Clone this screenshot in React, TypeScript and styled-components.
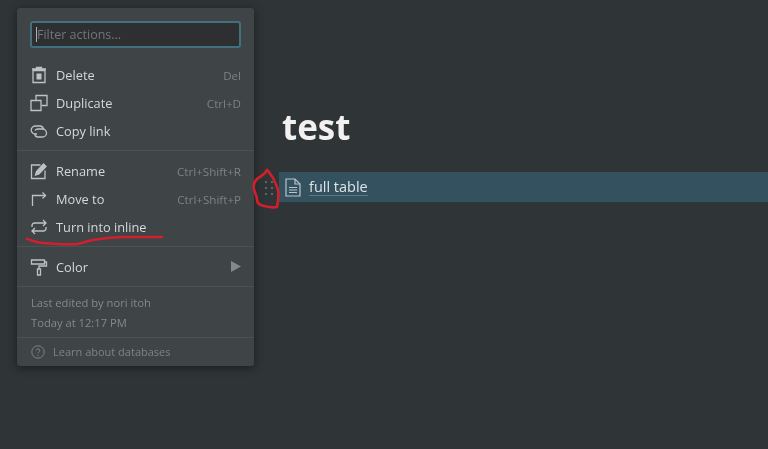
import styled, { createGlobalStyle } from 'styled-components';
import type { ReactNode } from 'react';

const GlobalStyle = createGlobalStyle`
	html, body {
		margin: 0;
		height: 100%;
		background: #2f3437;
		overflow: hidden;
	}
	#root {
		height: 100%;
	}
`;

const StyledPage = styled.div`
	position: relative;
	width: 768px;
	height: 449px;
	background: #2f3437;
	font-family: 'Open Sans', 'Noto Sans', sans-serif;
	filter: blur(0.4px);
`;

const StyledContent = styled.main`
	display: flex;
	flex-direction: column;
	padding: 104px 0 0 279px;
`;

const StyledTitle = styled.h1`
	margin: 0 0 22px 3px;
	font-family: 'Open Sans', sans-serif;
	font-size: 35px;
	line-height: 46px;
	font-weight: 700;
	color: #f2f1ef;
`;

const StyledDbRow = styled.div`
	display: flex;
	align-items: center;
	gap: 8px;
	height: 30px;
	padding-left: 6px;
	background: #33515f;
	color: #dfe5e7;
	font-size: 14.5px;
`;

const StyledDbName = styled.span`
	border-bottom: 1px solid #5d7783;
	line-height: 17px;
`;

const StyledMenu = styled.div`
	position: absolute;
	left: 17px;
	top: 8px;
	width: 237px;
	height: 358px;
	display: flex;
	flex-direction: column;
	background: #3f4447;
	border-radius: 3px;
	box-shadow: 0 2px 10px rgba(0, 0, 0, 0.45);
`;

const StyledFilter = styled.div`
	display: flex;
	align-items: center;
	flex-shrink: 0;
	box-sizing: border-box;
	height: 27px;
	margin: 13px;
	padding-left: 4px;
	background: #2d2f31;
	border: 2.5px solid #43707f;
	border-radius: 3px;
	color: #72767a;
	font-size: 12.5px;
`;

const StyledCaret = styled.span`
	width: 1px;
	height: 15px;
	background: #aab0b3;
`;

const StyledSection = styled.section`
	display: flex;
	flex-direction: column;
	flex-shrink: 0;
	padding: 0 0 5px;
	margin-bottom: 6px;
	border-bottom: 1px solid #4c5154;
`;

const StyledItem = styled.div`
	display: flex;
	align-items: center;
	gap: 8px;
	height: 28px;
	padding: 0 13px;
	color: #d5d7d8;
	font-size: 12.8px;
`;

const StyledItemIcon = styled.svg`
	width: 18px;
	height: 18px;
	flex-shrink: 0;
	fill: none;
	stroke: #bfc2c3;
	stroke-width: 1.3;
`;

const StyledItemLabel = styled.span`
	flex: 1;
`;

const StyledShortcut = styled.span`
	color: #7d8184;
	font-size: 11.6px;
`;

const StyledMeta = styled.div`
	display: flex;
	flex-direction: column;
	flex-shrink: 0;
	gap: 5px;
	padding: 2px 14px 7px;
	border-bottom: 1px solid #4c5154;
	color: #85898b;
	font-size: 11.2px;
	line-height: 15px;
`;

const StyledHelp = styled.div`
	display: flex;
	align-items: center;
	gap: 8px;
	padding: 6px 14px;
	color: #7f8386;
	font-size: 11px;
`;

const StyledInk = styled.svg`
	position: absolute;
	left: 0;
	top: 0;
	width: 768px;
	height: 449px;
	fill: none;
	stroke: #d11f2c;
	stroke-width: 2.6;
	stroke-linecap: round;
	stroke-linejoin: round;
	pointer-events: none;
`;

const StyledDots = styled.div`
	position: absolute;
	left: 265px;
	top: 181px;
	display: grid;
	grid-template-columns: repeat(2, 2px);
	gap: 4px;
`;

const StyledDot = styled.span`
	width: 2px;
	height: 2px;
	border-radius: 50%;
	background: #6f7478;
`;

function DragDots() {
	return (
		<StyledDots>
			{Array.from({ length: 6 }).map((_, i) => (
				<StyledDot key={i} />
			))}
		</StyledDots>
	);
}

function Item({ icon, label, shortcut }: { icon: ReactNode; label: string; shortcut?: ReactNode }) {
	return (
		<StyledItem>
			<StyledItemIcon viewBox="0 0 18 18">{icon}</StyledItemIcon>
			<StyledItemLabel>{label}</StyledItemLabel>
			{shortcut && <StyledShortcut>{shortcut}</StyledShortcut>}
		</StyledItem>
	);
}

function App() {
	return (
		<StyledPage>
			<GlobalStyle />
			<StyledContent>
				<StyledTitle>test</StyledTitle>
				<StyledDbRow>
					<svg width="16" height="19" viewBox="0 0 16 19" fill="none" stroke="#b9c5ca" strokeWidth="1.2">
						<path d="M1 1h9l5 5v12H1z" />
						<path d="M10 1v5h5" />
						<path d="M4 9.500h8M4 12h8M4 14.500h8" />
					</svg>
					<StyledDbName>full table</StyledDbName>
				</StyledDbRow>
			</StyledContent>

			<StyledMenu>
				<StyledFilter>
					<StyledCaret />
					Filter actions...
				</StyledFilter>
				<StyledSection>
					<Item
						label="Delete"
						shortcut="Del"
						icon={
							<>
								<path d="M3 4.500h12v12H3zM2 3h14M6.500 3V1.500h5V3" />
								<path d="M6.500 7.500h5v6h-5z" fill="#bfc2c3" stroke="none" />
							</>
						}
					/>
					<Item
						label="Duplicate"
						shortcut="Ctrl+D"
						icon={
							<>
								<path d="M1 6.500h10v10H1z" />
								<path d="M6 6V1.500h11v10h-5.500" />
							</>
						}
					/>
					<Item
						label="Copy link"
						icon={
							<>
								<path d="M7 12H5.500a4 4 0 0 1-.5-8h5a4 4 0 0 1 3.500 3" />
								<path d="M5 8.500a3.500 3.500 0 0 1 3-1.500h4.500a4 4 0 0 1 0 8h-5A4 4 0 0 1 4.500 12" />
							</>
						}
					/>
				</StyledSection>
				<StyledSection>
					<Item
						label="Rename"
						shortcut="Ctrl+Shift+R"
						icon={
							<>
								<path d="M15 8.500v8H1.500V3h9" />
								<path d="M5.500 13l1-3.500 7-7.500 2.500 2.500-7 7.500z" fill="#bfc2c3" />
							</>
						}
					/>
					<Item
						label="Move to"
						shortcut="Ctrl+Shift+P"
						icon={
							<>
								<path d="M2.500 16V5.500h13" />
								<path d="M12.500 2.500l3 3-3 3" />
							</>
						}
					/>
					<Item
						label="Turn into inline"
						icon={
							<>
								<path d="M2 9V7.500a2.500 2.500 0 0 1 2.500-2.500H16M13 2l3 3-3 3" />
								<path d="M16 9v1.500a2.500 2.500 0 0 1-2.500 2.500H2M5 10l-3 3 3 3" />
							</>
						}
					/>
				</StyledSection>
				<StyledSection>
					<Item
						label="Color"
						shortcut={
							<svg width="10" height="11" viewBox="0 0 10 11">
								<path d="M0 0l10 5.500-10 5.500z" fill="#85898b" />
							</svg>
						}
						icon={
							<>
								<path d="M1.500 2h13v4h-13z" />
								<path d="M14.500 4h2v4H9v3" />
								<path d="M7.500 11h3v6h-3z" />
							</>
						}
					/>
				</StyledSection>
				<StyledMeta>
					<span>Last edited by nori itoh</span>
					<span>Today at 12:17 PM</span>
				</StyledMeta>
				<StyledHelp>
					<svg width="14" height="14" viewBox="0 0 14 14" fill="none" stroke="#7f8386" strokeWidth="1">
						<circle cx="7" cy="7" r="6.200" />
						<path d="M5.200 5.500a1.800 1.800 0 1 1 2.600 1.700c-.6.300-.8.700-.8 1.300M7 10v1" />
					</svg>
					Learn about databases
				</StyledHelp>
			</StyledMenu>

			<StyledInk viewBox="0 0 768 449">
				<path d="M27 239c5 1 10 4 16 4 12 1 24 2 34 1 6-1 10-3 16-4 12-2 24-3 34-3h35" />
				<path d="M267 170c-2 5-7 6-10 9-3 3-4 6-3 10 1 4 3 7 3 11 0 4 3 5 7 6 4 1 9 2 13 1 1-5 2-11 1-17-1-4-3-8-5-12-2-3-4-6-6-8z" />
			</StyledInk>
			<DragDots />
		</StyledPage>
	);
}

export default App;
